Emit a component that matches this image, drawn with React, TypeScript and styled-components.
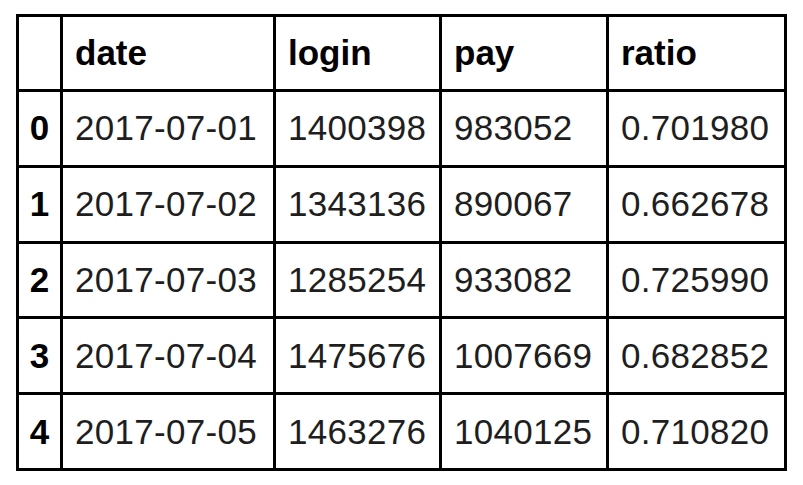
import React from "react";
import styled, { createGlobalStyle } from "styled-components";

const GlobalStyle = createGlobalStyle`
  html, body {
    margin: 0;
    padding: 0;
    background: #ffffff;
  }
  body {
    font-family: "Liberation Sans", Arial, sans-serif;
  }
`;

const Page = styled.div`
  padding: 14px 0 0 16px;
`;

const Table = styled.table`
  border-collapse: collapse;
  table-layout: fixed;
  width: 771px;
  border: 3px solid #000;
  font-family: "Liberation Sans", Arial, sans-serif;
  font-size: 35px;
  color: #1e1e1e;
`;

const Row = styled.tr<{ $h: number }>`
  height: ${(p) => p.$h}px;
`;

const HeadCell = styled.th`
  border: 3px solid #000;
  padding: 0 0 0 12px;
  text-align: left;
  font-weight: bold;
  vertical-align: middle;
  color: #000;
`;

const IndexCell = styled.th`
  border: 3px solid #000;
  padding: 0;
  text-align: center;
  font-weight: bold;
  vertical-align: middle;
  color: #000;
`;

const Cell = styled.td`
  border: 3px solid #000;
  padding: 0 0 0 12px;
  text-align: left;
  vertical-align: middle;
  white-space: nowrap;
  letter-spacing: 0.3px;
`;

const columns = ["date", "login", "pay", "ratio"];
const widths = [44, 213, 166, 167, 178];

const rows: [string, number, number, string][] = [
  ["2017-07-01", 1400398, 983052, "0.701980"],
  ["2017-07-02", 1343136, 890067, "0.662678"],
  ["2017-07-03", 1285254, 933082, "0.725990"],
  ["2017-07-04", 1475676, 1007669, "0.682852"],
  ["2017-07-05", 1463276, 1040125, "0.710820"],
];

export default function App() {
  return (
    <>
      <GlobalStyle />
      <Page>
        <Table>
          <colgroup>
            {widths.map((w, i) => (
              <col key={i} style={{ width: w }} />
            ))}
          </colgroup>
          <thead>
            <Row $h={75}>
              <IndexCell />
              {columns.map((c) => (
                <HeadCell key={c}>{c}</HeadCell>
              ))}
            </Row>
          </thead>
          <tbody>
            {rows.map((r, i) => (
              <Row $h={75.8} key={i}>
                <IndexCell>{i}</IndexCell>
                <Cell>{r[0]}</Cell>
                <Cell>{r[1]}</Cell>
                <Cell>{r[2]}</Cell>
                <Cell>{r[3]}</Cell>
              </Row>
            ))}
          </tbody>
        </Table>
      </Page>
    </>
  );
}
